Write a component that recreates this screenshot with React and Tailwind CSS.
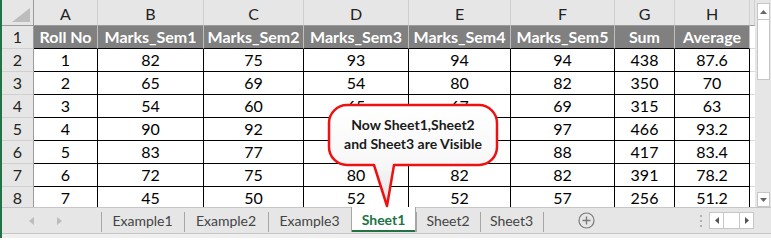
import React from "react";

const cols = ["A", "B", "C", "D", "E", "F", "G", "H", ""];
const header = ["Roll No", "Marks_Sem1", "Marks_Sem2", "Marks_Sem3", "Marks_Sem4", "Marks_Sem5", "Sum", "Average"];
// D and E of rows 5 and 6 sit under the callout, so they are left blank
const rows = [
  [1, 82, 75, 93, 94, 94, 438, 87.6],
  [2, 65, 69, 54, 80, 82, 350, 70],
  [3, 54, 60, 65, 67, 69, 315, 63],
  [4, 90, 92, "", "", 97, 466, 93.2],
  [5, 83, 77, "", "", 88, 417, 83.4],
  [6, 72, 75, 80, 82, 82, 391, 78.2],
  [7, 45, 50, 52, 52, 57, 256, 51.2],
];

function Callout() {
  return (
    <div className="absolute left-[325px] top-[103px] w-[174px] h-[106px]">
      <svg width="174" height="106" className="absolute inset-0">
        <defs>
          <linearGradient id="cfill" x1="0" y1="0" x2="0" y2="1">
            <stop offset="0" stopColor="#ffffff" />
            <stop offset="0.6" stopColor="#f7f7f7" />
            <stop offset="1" stopColor="#e2e2e2" />
          </linearGradient>
        </defs>
        <path
          d="M20 2 H152 A18 18 0 0 1 170 20 V44 A18 18 0 0 1 152 62 H67 L60 103 L47 62 H20 A18 18 0 0 1 2 44 V20 A18 18 0 0 1 20 2 Z"
          fill="url(#cfill)"
          stroke="#ee1111"
          strokeWidth="2.5"
          strokeLinejoin="round"
        />
      </svg>
      <div className="absolute left-0 top-[13px] w-[172px] text-center text-[14px] leading-[18.5px] font-bold text-[#1a1a1a]">
        <div>Now Sheet1,Sheet2</div>
        <div>and Sheet3 are Visible</div>
      </div>
    </div>
  );
}

function VScroll() {
  return (
    <div className="w-[16px] h-full bg-[#e6e6e6] flex flex-col items-center pt-[3px]">
      <div className="w-[13px] h-[17px] bg-white border border-[#c6c6c6] flex items-center justify-center">
        <svg width="7" height="4"><path d="M0 4 L3.5 0 L7 4 Z" fill="#666" /></svg>
      </div>
      <div className="w-[13px] h-[60px] bg-white border border-t-0 border-[#c6c6c6]" />
      <div className="flex-1" />
      <div className="w-[13px] h-[15px] mb-[1px] bg-white border border-[#c6c6c6] flex items-center justify-center">
        <svg width="7" height="4"><path d="M0 0 L3.5 4 L7 0 Z" fill="#666" /></svg>
      </div>
    </div>
  );
}

function Tab({ label, w }) {
  return (
    <div className={`${w} h-full flex items-center relative`}>
      <div className="absolute left-0 top-[4px] bottom-[1px] w-px bg-[#a6a6a6]" />
      <div className="w-full text-center text-[14px] text-[#444]">{label}</div>
    </div>
  );
}

export default function App() {
  return (
    <div className="w-[771px] h-[238px] overflow-hidden bg-white border-l-2 border-[#217346] relative" style={{ fontFamily: "Lato, 'Open Sans', sans-serif" }}>
      <div className="flex h-[208px]">
        <div className="w-[753px] h-full overflow-hidden grid grid-cols-[32px_64px_106px_100px_105px_102px_104px_60px_75px_5px] grid-rows-[26px_23px_23px_23px_23px_23px_23px_23px_23px] text-[16px]">
          <div className="bg-[#e6e6e6] border-r border-b border-[#9b9b9b] relative">
            <svg width="18" height="14" className="absolute right-[3px] bottom-[3px]">
              <path d="M18 0 L18 14 L0 14 Z" fill="#bdbdbd" />
            </svg>
          </div>
          {cols.map((c, i) => (
            <div key={c + i} className="bg-[#e6e6e6] border-r border-b border-r-[#d0d0d0] border-b-[#9b9b9b] flex items-center justify-center pt-[2px] text-[#222]">
              {c}
            </div>
          ))}

          <div className="bg-[#e6e6e6] border-r border-b border-r-[#9b9b9b] border-b-[#d0d0d0] flex items-center justify-center text-[#222]">1</div>
          {header.map((h) => (
            <div key={h} className="bg-[#808080] border-r border-b border-r-[#bfbfbf] border-b-black flex items-center justify-center font-bold text-white">
              {h}
            </div>
          ))}
          <div className="bg-white border-b border-[#d9d9d9]" />

          {rows.map((r, ri) => (
            <React.Fragment key={ri}>
              <div className="bg-[#e6e6e6] border-r border-b border-r-[#9b9b9b] border-b-[#d0d0d0] flex items-center justify-center text-[#222]">
                {ri + 2}
              </div>
              {r.map((v, ci) => (
                <div key={ci} className="bg-white border-r border-b border-black flex items-center justify-center text-black">
                  {v}
                </div>
              ))}
              <div className="bg-white border-b border-[#d9d9d9]" />
            </React.Fragment>
          ))}
        </div>
        <VScroll />
      </div>

      <div className="h-[26px] bg-[#e6e6e6] border-t border-[#c6c6c6] flex items-stretch relative -mt-px">
        <div className="w-[99px] h-full flex items-center">
          <svg width="5" height="8" className="ml-[27px]"><path d="M5 0 L0 4 L5 8 Z" fill="#bcbcbc" /></svg>
          <svg width="5" height="8" className="ml-[23px]"><path d="M0 0 L5 4 L0 8 Z" fill="#bcbcbc" /></svg>
        </div>
        <Tab label="Example1" w="w-[83px]" />
        <Tab label="Example2" w="w-[84px]" />
        <Tab label="Example3" w="w-[83px]" />
        <div className="w-[65px] h-[25px] bg-white border-x border-[#a6a6a6] -mt-px flex flex-col">
          <div className="flex-1 flex items-center justify-center text-[14px] font-bold text-[#217346] pt-[2px]">Sheet1</div>
          <div className="h-[2px] bg-[#217346]" />
        </div>
        <Tab label="Sheet2" w="w-[64px]" />
        <Tab label="Sheet3" w="w-[63px]" />
        <div className="w-px h-[20px] mt-[4px] bg-[#a6a6a6]" />
        <div className="w-[85px] flex items-center justify-center">
          <svg width="17" height="17" viewBox="0 0 17 17">
            <circle cx="8.5" cy="8.5" r="7.5" fill="none" stroke="#7a7a7a" strokeWidth="1.2" />
            <path d="M8.5 4.5 V12.5 M4.5 8.5 H12.5" stroke="#7a7a7a" strokeWidth="1.4" />
          </svg>
        </div>
        <div className="flex-1" />
        <div className="w-[16px] flex flex-col items-center justify-center gap-[3px]">
          <div className="w-[2px] h-[2px] bg-[#b0b0b0]" />
          <div className="w-[2px] h-[2px] bg-[#b0b0b0]" />
          <div className="w-[2px] h-[2px] bg-[#b0b0b0]" />
        </div>
        <div className="w-[45px] h-[17px] mt-[4px] bg-white border border-[#c6c6c6] flex">
          <div className="w-[14px] border-r border-[#c6c6c6] flex items-center justify-center">
            <svg width="4" height="7"><path d="M4 0 L0 3.5 L4 7 Z" fill="#555" /></svg>
          </div>
          <div className="flex-1" />
          <div className="w-[14px] border-l border-[#c6c6c6] flex items-center justify-center">
            <svg width="4" height="7"><path d="M0 0 L4 3.5 L0 7 Z" fill="#555" /></svg>
          </div>
        </div>
        <div className="w-[17px]" />
      </div>
      <div className="h-[5px] bg-[#f0f0f0] border-t border-[#c6c6c6]" />

      <Callout />
    </div>
  );
}
